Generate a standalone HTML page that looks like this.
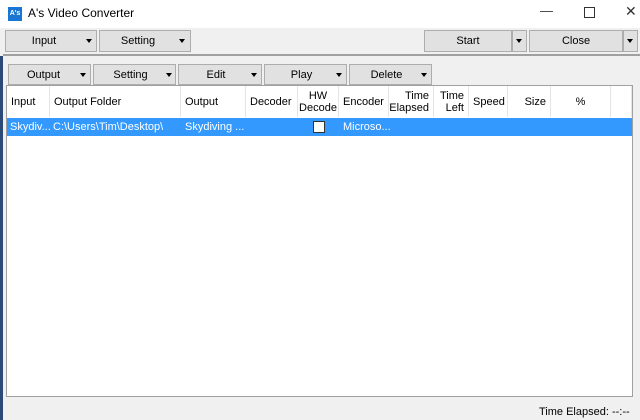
<!DOCTYPE html><html><head><style>
body{margin:0;width:640px;height:420px;background:#f0f0f0;font-family:"Liberation Sans",sans-serif;font-size:11px;color:#000;position:relative;overflow:hidden}
.a{position:absolute}
.btn{position:absolute;background:#e1e1e1;border:1px solid #adadad;box-sizing:border-box;height:22px;line-height:20px;text-align:center}
.arr{position:absolute;width:0;height:0;border-left:3.5px solid transparent;border-right:3.5px solid transparent;border-top:4px solid #000}
.hd{position:absolute;top:86px;height:31px;border-right:1px solid #e5e5e5;box-sizing:border-box;padding:0 4px;display:flex;align-items:center}
.r{color:#fff;position:absolute;top:118px;height:18px;line-height:18px}
</style></head><body>
<div class="a" style="left:0;top:0;width:640px;height:28px;background:#fff"></div>
<div class="a" style="left:8px;top:7px;width:14px;height:14px;background:#1976d2;color:#fff;font-size:7px;font-weight:bold;line-height:14px;text-align:center">A's</div>
<div class="a" style="left:28px;top:6px;font-size:12px">A's Video Converter</div>
<div class="a" style="left:540px;top:3px;font-size:13px;color:#333">&#8212;</div>
<div class="a" style="left:584px;top:7px;width:9px;height:9px;border:1px solid #333"></div>
<div class="a" style="left:625px;top:3px;font-size:14px;color:#333">✕</div>

<div class="btn" style="left:5px;top:30px;width:92px"><span style="margin-right:14px">Input</span></div><div class="arr" style="left:86px;top:39px"></div>
<div class="btn" style="left:99px;top:30px;width:92px"><span style="margin-right:14px">Setting</span></div><div class="arr" style="left:179px;top:39px"></div>
<div class="btn" style="left:424px;top:30px;width:88px">Start</div>
<div class="btn" style="left:512px;top:30px;width:15px"></div><div class="arr" style="left:516px;top:39px"></div>
<div class="btn" style="left:529px;top:30px;width:94px">Close</div>
<div class="btn" style="left:623px;top:30px;width:15px"></div><div class="arr" style="left:627px;top:39px"></div>
<div class="a" style="left:3px;top:54px;width:637px;height:2px;background:#a0a0a0"></div>
<div class="a" style="left:0;top:56px;width:3px;height:364px;background:#2b4a78"></div>

<div class="btn" style="left:8px;top:64px;width:83px;height:21px"><span style="margin-right:12px">Output</span></div><div class="arr" style="left:80px;top:73px"></div>
<div class="btn" style="left:93px;top:64px;width:83px;height:21px"><span style="margin-right:8px">Setting</span></div><div class="arr" style="left:166px;top:73px"></div>
<div class="btn" style="left:178px;top:64px;width:84px;height:21px"><span style="margin-right:8px">Edit</span></div><div class="arr" style="left:251px;top:73px"></div>
<div class="btn" style="left:264px;top:64px;width:83px;height:21px"><span style="margin-right:8px">Play</span></div><div class="arr" style="left:336px;top:73px"></div>
<div class="btn" style="left:349px;top:64px;width:83px;height:21px"><span style="margin-right:8px">Delete</span></div><div class="arr" style="left:421px;top:73px"></div>

<div class="a" style="left:6px;top:85px;width:627px;height:312px;background:#fff;border:1px solid #a0a0a0;box-sizing:border-box"></div>
<div class="hd" style="left:7px;width:43px">Input</div>
<div class="hd" style="left:50px;width:131px">Output Folder</div>
<div class="hd" style="left:181px;width:65px">Output</div>
<div class="hd" style="left:246px;width:52px">Decoder</div>
<div class="hd" style="left:298px;width:41px;text-align:center;justify-content:center">HW<br>Decode</div>
<div class="hd" style="left:339px;width:50px">Encoder</div>
<div class="hd" style="left:389px;width:45px;text-align:right;justify-content:flex-end;overflow:hidden">Time<br>Elapsed</div>
<div class="hd" style="left:434px;width:35px;text-align:right;justify-content:flex-end">Time<br>Left</div>
<div class="hd" style="left:469px;width:39px">Speed</div>
<div class="hd" style="left:508px;width:43px;justify-content:flex-end">Size</div>
<div class="hd" style="left:551px;width:60px;justify-content:center">%</div>
<div class="hd" style="left:611px;width:21px"></div>
<div class="a" style="left:7px;top:118px;width:625px;height:18px;background:#3399ff"></div>
<div class="r" style="left:10px">Skydiv...</div>
<div class="r" style="left:53px">C:\Users\Tim\Desktop\</div>
<div class="r" style="left:185px">Skydiving ...</div>
<div class="a" style="left:313px;top:121px;width:10px;height:10px;background:#fff;border:1px solid #333"></div>
<div class="r" style="left:343px">Microso...</div>
<div class="a" style="left:539px;top:406px;font-size:11px">Time Elapsed: --:--</div>
</body></html>
